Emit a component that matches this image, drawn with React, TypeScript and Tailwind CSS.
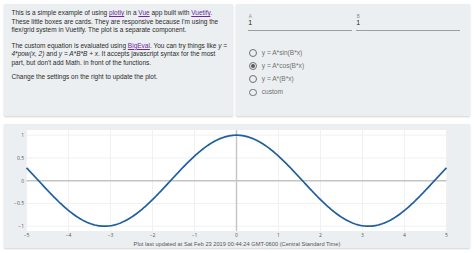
import React from "react";

const X0 = 22.5;
const XS = 42;
const Y0 = 56.7;
const YS = 45.5;

function px(x: number) {
  return X0 + (x + 5) * XS;
}
function py(y: number) {
  return Y0 - y * YS;
}

function curve() {
  const pts: string[] = [];
  for (let i = 0; i <= 400; i++) {
    const x = -5 + i * 0.025;
    pts.push(`${i === 0 ? "M" : "L"}${px(x).toFixed(2)},${py(Math.cos(x)).toFixed(2)}`);
  }
  return pts.join(" ");
}

function Plot() {
  const xt = [-5, -4, -3, -2, -1, 0, 1, 2, 3, 4, 5];
  const yt = [1, 0.5, 0, -0.5, -1];
  return (
    <svg width="464" height="116" className="block" style={{ fontFamily: '"Open Sans", "Liberation Sans", sans-serif' }}>
      <rect x={X0} y={6} width={420} height={101} fill="#ffffff" />
      {xt.map((t) =>
        t === 0 ? null : (
          <line key={"gx" + t} x1={px(t)} x2={px(t)} y1={6} y2={107} stroke="#eeeeee" strokeWidth={0.8} />
        )
      )}
      {yt.map((t) =>
        t === 0 ? null : (
          <line key={"gy" + t} x1={X0} x2={X0 + 420} y1={py(t)} y2={py(t)} stroke="#eeeeee" strokeWidth={0.8} />
        )
      )}
      <line x1={X0} x2={X0 + 420} y1={py(0)} y2={py(0)} stroke="#c4c4c4" strokeWidth={1.4} />
      <line x1={px(0)} x2={px(0)} y1={6} y2={107} stroke="#c4c4c4" strokeWidth={1.4} />
      <path d={curve()} fill="none" stroke="#1f5f9e" strokeWidth={1.7} />
      {yt.map((t) => (
        <text key={"ly" + t} x={20} y={py(t) + 1.8} textAnchor="end" fontSize="5" fill="#555">
          {t === 0 ? "0" : t < 0 ? "−" + Math.abs(t) : String(t)}
        </text>
      ))}
      {xt.map((t) => (
        <text key={"lx" + t} x={px(t)} y={112.5} textAnchor="middle" fontSize="5" fill="#555">
          {t < 0 ? "−" + Math.abs(t) : String(t)}
        </text>
      ))}
    </svg>
  );
}

function Radio({ label, checked }: { label: string; checked?: boolean }) {
  return (
    <div className="flex items-center h-[13.1px]">
      <div className="w-[7.5px] h-[7.5px] rounded-full border border-[#6f6f6f] flex items-center justify-center">
        {checked && <div className="w-[3.6px] h-[3.6px] rounded-full bg-[#5a5a5a]" />}
      </div>
      <span className="ml-[5px] text-[6.6px] leading-[8px] text-[#707070]">{label}</span>
    </div>
  );
}

function Field({ label, value }: { label: string; value: string }) {
  return (
    <div className="w-[104px] flex flex-col">
      <span className="text-[4.6px] leading-[6px] text-[#8a8a8a] pl-[0.5px]">{label}</span>
      <span className="text-[7px] leading-[8px] text-[#1e1e1e] mt-[-0.5px]">{value}</span>
      <div className="h-px bg-[#9e9e9e] mt-[3px]" />
    </div>
  );
}

const A = ({ children }: { children: React.ReactNode }) => (
  <a className="text-[#6a2a9a] underline">{children}</a>
);

export default function App() {
  return (
    <div
      className="w-[474px] h-[253px] bg-white p-[4px] flex flex-col gap-[8px] overflow-hidden"
      style={{ fontFamily: '"Liberation Sans", Arial, sans-serif' }}
    >
      <div className="flex gap-[3px] h-[112px]">
        <div className="flex-1 bg-[#eceff1] rounded-[1px] shadow-[0_1px_2px_rgba(0,0,0,0.18)] pl-[7.5px] pt-[5px] text-[6.5px] leading-[8.6px] text-[#2b2b2b] whitespace-nowrap">
          <p>
            This is a simple example of using <A>plotly</A> in a <A>Vue</A> app built with <A>Vuetify</A>.
            <br />
            These little boxes are cards. They are responsive because I'm using the
            <br />
            flex/grid system in Vuetify. The plot is a separate component.
          </p>
          <p className="mt-[7px]">
            The custom equation is evaluated using <A>BigEval</A>. You can try things like <i>y =</i>
            <br />
            <i>4*pow(x, 2)</i> and <i>y = A*B*B + x</i>. It accepts javascript syntax for the most
            <br />
            part, but don't add Math. in front of the functions.
          </p>
          <p className="mt-[5px]">Change the settings on the right to update the plot.</p>
        </div>
        <div className="flex-1 bg-[#eceff1] rounded-[1px] shadow-[0_1px_2px_rgba(0,0,0,0.18)] pl-[12px] pt-[9.5px]">
          <div className="flex gap-[4px]">
            <Field label="A" value="1" />
            <Field label="B" value="1" />
          </div>
          <div className="mt-[15.5px] pl-[1px] flex flex-col">
            <Radio label="y = A*sin(B*x)" />
            <Radio label="y = A*cos(B*x)" checked />
            <Radio label="y = A*(B*x)" />
            <Radio label="custom" />
          </div>
        </div>
      </div>
      <div className="h-[124px] bg-[#eceff1] rounded-[1px] shadow-[0_1px_2px_rgba(0,0,0,0.18)] flex flex-col">
        <Plot />
        <div className="text-center text-[5.7px] leading-[8px] text-[#555]">
          Plot last updated at Sat Feb 23 2019 00:44:24 GMT-0600 (Central Standard Time)
        </div>
      </div>
    </div>
  );
}
